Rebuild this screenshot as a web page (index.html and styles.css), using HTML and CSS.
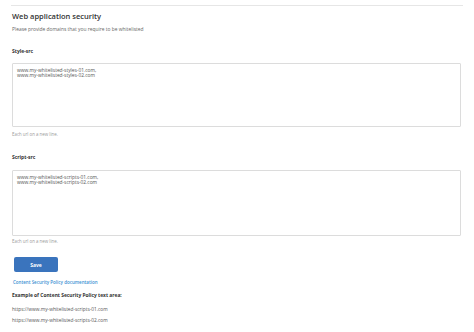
FILE: index.html
```html
<!DOCTYPE html>
<html>
<head>
<meta charset="utf-8">
<link rel="stylesheet" href="styles.css">
</head>
<body>
<div class="page">
  <div class="rule"></div>
  <h1 class="title">Web application security</h1>
  <p class="subtitle">Please provide domains that you require to be whitelisted</p>

  <label class="label label-first">Style-src</label>
  <textarea class="field field-style">www.my-whitelisted-styles-01.com,
www.my-whitelisted-styles-02.com</textarea>
  <p class="help help-first">Each url on a new line.</p>

  <label class="label label-second">Script-src</label>
  <textarea class="field field-script">www.my-whitelisted-scripts-01.com,
www.my-whitelisted-scripts-02.com</textarea>
  <p class="help help-second">Each url on a new line.</p>

  <button class="save">Save</button>
  <a class="doc-link" href="#">Content Security Policy documentation</a>
  <p class="example-title">Example of Content Security Policy text area:</p>
  <p class="example-url example-url-first">https://www.my-whitelisted-scripts-01.com</p>
  <p class="example-url example-url-second">https://www.my-whitelisted-scripts-02.com</p>
</div>
</body>
</html>
```
FILE: styles.css
```css
* { box-sizing: border-box; }
html, body {
  margin: 0;
  padding: 0;
  background: #ffffff;
}
body {
  font-family: "Open Sans", "Liberation Sans", sans-serif;
  color: #333;
}
.page {
  padding: 0 13px 0 12px;
  display: flex;
  flex-direction: column;
  align-items: flex-start;
}
.rule {
  margin: 5px -2px 0 -1px;
  height: 1px;
  align-self: stretch;
  background: #e6e6e6;
}
.title {
  margin: 5px 0 0 0;
  font-size: 7.5px;
  line-height: 10px;
  font-weight: 600;
  color: #333;
}
.subtitle {
  margin: 5px 0 0 0;
  font-size: 4.9px;
  line-height: 6px;
  color: #666;
}
.label {
  display: block;
  font-size: 5px;
  line-height: 6px;
  font-weight: 700;
  color: #333;
}
.label-first { margin-top: 16px; }
.label-second { margin-top: 17px; }
.field {
  display: block;
  align-self: stretch;
  margin: 9px 0 0 0;
  padding: 4px 4px;
  border: 1px solid #dcdcdc;
  border-radius: 1px;
  resize: none;
  font-family: "Open Sans", "Liberation Sans", sans-serif;
  font-size: 4.85px;
  line-height: 5px;
  color: #555;
  background: #fff;
  outline: none;
}
.field-style { height: 64px; }
.field-script { height: 66px; margin-top: 10px; }
.help {
  margin: 4px 0 0 0;
  font-size: 4.4px;
  line-height: 6px;
  color: #999;
}
.help-second { margin-top: 2px; }
.save {
  margin: 13px 0 0 2px;
  width: 44px;
  height: 15px;
  padding: 0;
  border: none;
  border-radius: 2px;
  background: #3a74bd;
  color: #fff;
  font-family: "Open Sans", "Liberation Sans", sans-serif;
  font-size: 5px;
  font-weight: 700;
}
.doc-link {
  margin: 7px 0 0 1px;
  font-size: 4.5px;
  line-height: 6px;
  font-weight: 600;
  color: #3a8fd2;
  text-decoration: none;
}
.example-title {
  margin: 7px 0 0 0;
  font-size: 4.9px;
  line-height: 6px;
  font-weight: 700;
  color: #333;
}
.example-url {
  margin: 8px 0 0 0;
  font-size: 4.8px;
  line-height: 6px;
  color: #555;
}
.example-url-second { margin-top: 5px; }
```
